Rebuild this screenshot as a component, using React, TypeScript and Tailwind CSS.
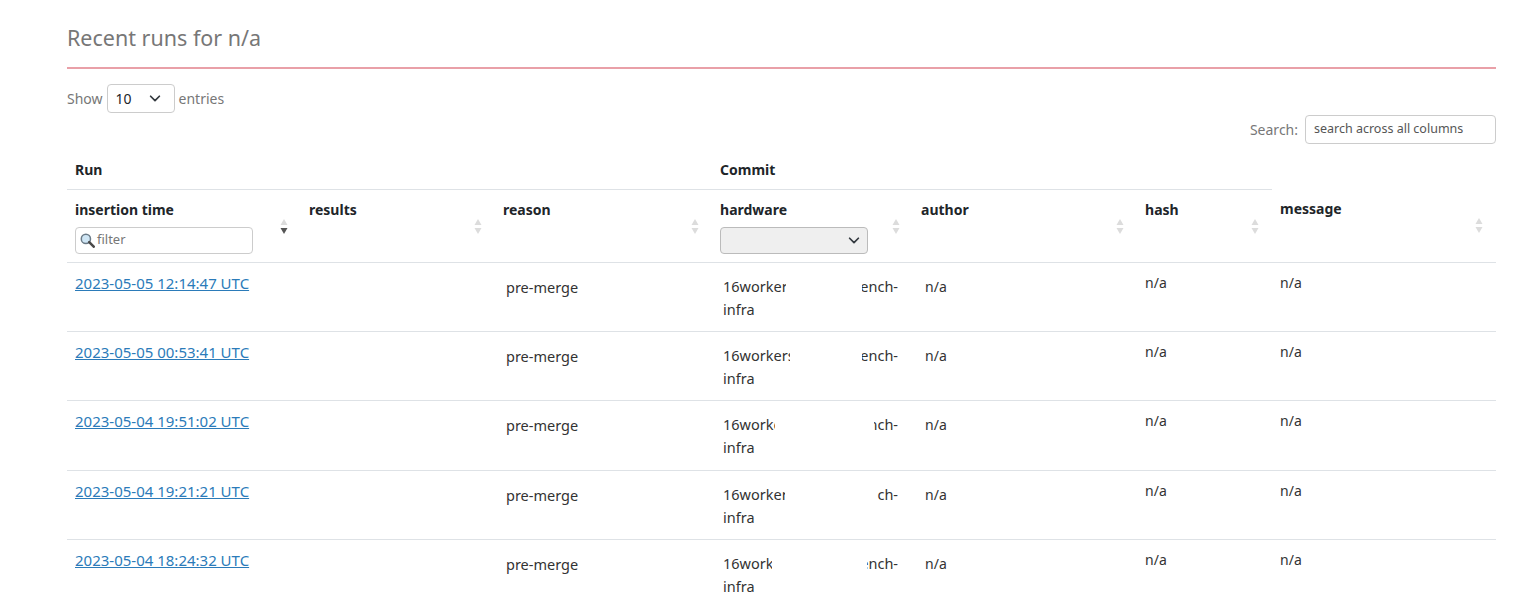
import React from "react";

const rows = [
  { t: "2023-05-05 12:14:47 UTC", l: 63, r: 862, h: "h-[69px]" },
  { t: "2023-05-05 00:53:41 UTC", l: 67, r: 862, h: "h-[69px]" },
  { t: "2023-05-04 19:51:02 UTC", l: 52, r: 874, h: "h-[70px]" },
  { t: "2023-05-04 19:21:21 UTC", l: 62, r: 877, h: "h-[69px]" },
  { t: "2023-05-04 18:24:32 UTC", l: 49, r: 867, h: "h-[69px]" },
];

function SortIcon({ active }: { active?: boolean }) {
  return (
    <svg
      className="absolute right-[13px] top-[29px]"
      width="8"
      height="16"
      viewBox="0 0 8 16"
    >
      <path d="M4 0 L7.5 6 L0.5 6 Z" fill="#dcdcdc" />
      <path d="M0.5 9 L7.5 9 L4 15 Z" fill={active ? "#555555" : "#dcdcdc"} />
    </svg>
  );
}

function Chevron({ className }: { className?: string }) {
  return (
    <svg className={className} width="14" height="14" viewBox="0 0 16 16" fill="none">
      <path d="M3 6l5 5 5-5" stroke="#343a40" strokeWidth="2" strokeLinecap="round" strokeLinejoin="round" />
    </svg>
  );
}

export default function App() {
  const base = "relative text-left font-bold text-[14px] text-[#212529] px-2";
  const th = base + " align-top";
  const grp = base + " align-bottom leading-[20px] border-b border-[#dee2e6] pb-[9px]";
  return (
    <div
      className="bg-white min-h-[607px] pl-[67px] pr-[28px] pt-[23px]"
      style={{ fontFamily: "'Noto Sans', 'Open Sans', sans-serif" }}
    >
      <h1 className="text-[21.5px] leading-[30px] text-[#777777] font-normal pb-[14px] border-b-2 border-[#e9a0a8]">
        Recent runs for n/a
      </h1>

      <div className="flex items-center mt-[14px] text-[14px] text-[#777777] h-[30px]">
        <span>Show</span>
        <div className="mx-[4px] w-[68px] h-[29px] border border-[#cccccc] rounded-[4px] flex items-center justify-between pl-[8px] pr-[12px] text-[#212529] text-[14px]">
          <span>10</span>
          <Chevron />
        </div>
        <span>entries</span>
      </div>

      <div className="flex justify-end items-center mt-[1px] h-[30px] text-[14px] text-[#777777]">
        <span className="mr-[7px]">Search:</span>
        <div className="w-[191px] h-[29px] border border-[#cccccc] rounded-[4px] flex items-center px-[8px] text-[12.5px] text-[#555555]">
          search across all columns
        </div>
      </div>

      <table className="w-full table-fixed border-collapse mt-[8px]">
        <colgroup>
          <col className="w-[234px]" />
          <col className="w-[194px]" />
          <col className="w-[217px]" />
          <col className="w-[201px]" />
          <col className="w-[224px]" />
          <col className="w-[135px]" />
          <col className="w-[224px]" />
        </colgroup>
        <thead>
          <tr className="h-[37px]">
            <th colSpan={3} className={grp}>Run</th>
            <th colSpan={3} className={grp}>Commit</th>
            <th className={th}></th>
          </tr>
          <tr className="h-[73px] border-b border-[#dee2e6]">
            <th className={th + " pt-[10px]"}>
              <div className="leading-[20px]">insertion time</div>
              <div className="mt-[7px] w-[178px] h-[27px] border border-[#cccccc] rounded-[4px] flex items-center pl-[4px] font-normal text-[13px] text-[#777777]">
                <svg width="15" height="15" viewBox="0 0 14 14" className="mr-[2px]">
                  <circle cx="5.5" cy="5.5" r="4.3" fill="#cfe6f5" stroke="#6b7b88" strokeWidth="1.4" />
                  <path d="M8.6 8.6 L12.8 12.8" stroke="#4a4a4a" strokeWidth="2.4" strokeLinecap="round" />
                </svg>
                filter
              </div>
              <SortIcon active />
            </th>
            <th className={th + " pt-[10px]"}>
              <div className="leading-[20px]">results</div>
              <SortIcon />
            </th>
            <th className={th + " pt-[10px]"}>
              <div className="leading-[20px]">reason</div>
              <SortIcon />
            </th>
            <th className={th + " pt-[10px]"}>
              <div className="leading-[20px]">hardware</div>
              <div className="mt-[7px] w-[148px] h-[27px] border border-[#bbbbbb] rounded-[4px] bg-[#efefef] flex items-center justify-end pr-[6px]">
                <Chevron />
              </div>
              <SortIcon />
            </th>
            <th className={th + " pt-[10px]"}>
              <div className="leading-[20px]">author</div>
              <SortIcon />
            </th>
            <th className={th + " pt-[10px]"}>
              <div className="leading-[20px]">hash</div>
              <SortIcon />
            </th>
            <th className={th + " pt-[10px]"}>
              <div className="leading-[20px]">message</div>
              <SortIcon />
            </th>
          </tr>
        </thead>
        <tbody className="text-[14px] text-[#333333]">
          {rows.map((r, i) => (
            <tr key={i} className="border-b border-[#dee2e6] align-top">
              <td className={r.h + " px-2 pt-[10px] leading-[20px]"}>
                <a href="#" className="text-[15px] text-[#2b7bb9] underline">{r.t}</a>
              </td>
              <td className="px-2"></td>
              <td className="px-2 pt-[14px] leading-[20px]">
                <div className="pl-[3px] text-[14.5px]">pre-merge</div>
              </td>
              <td className="px-2 pt-[12px] leading-[23px] text-[14.5px]">
                <div className="pl-[3px] w-[178px] flex justify-between">
                  <div className="overflow-hidden whitespace-nowrap" style={{ width: r.l }}>
                    16workers-bench-infra
                  </div>
                  <div className="overflow-hidden whitespace-nowrap flex justify-end" style={{ width: 898 - r.r }}>
                    <span>16workers-bench-</span>
                  </div>
                </div>
                <div className="pl-[3px]">infra</div>
              </td>
              <td className="px-2 pt-[14px] leading-[20px]">
                <div className="pl-[4px]">n/a</div>
              </td>
              <td className="px-2 pt-[10px] leading-[20px]">n/a</td>
              <td className="px-2 pt-[10px] leading-[20px]">n/a</td>
            </tr>
          ))}
        </tbody>
      </table>
    </div>
  );
}
